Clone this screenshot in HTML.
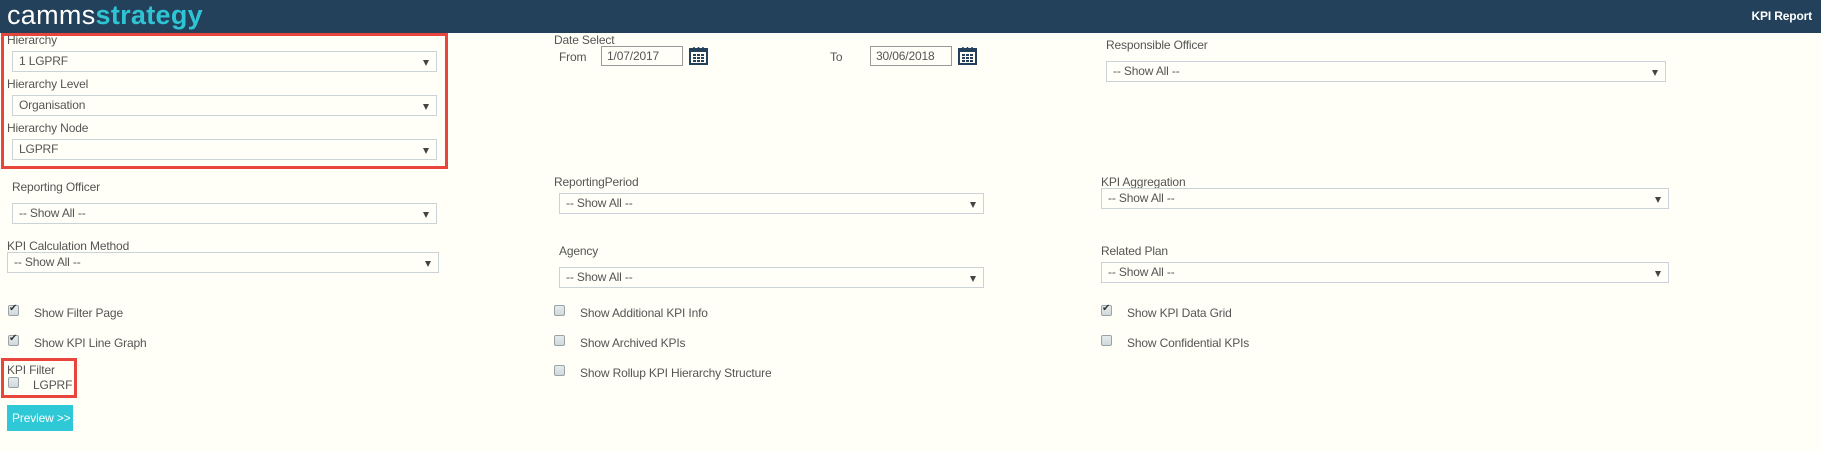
<!DOCTYPE html>
<html><head><meta charset="utf-8"><style>
*{margin:0;padding:0;box-sizing:border-box}
body{width:1821px;height:451px;background:#fffff7;font-family:"Liberation Sans",sans-serif;font-size:12px;letter-spacing:-0.15px;color:#555;position:relative;overflow:hidden}
.hdr{position:absolute;left:0;top:0;width:1821px;height:33px;background:#23415a}
.logo{position:absolute;left:7px;top:0px;font-size:27px;color:#fff;letter-spacing:0.3px;line-height:30px}
.logo b{color:#2fc4d4;font-weight:bold}
.kr{position:absolute;right:9px;top:9px;color:#fff;font-weight:bold;font-size:12px}
.a{position:absolute;white-space:nowrap}
.lbl{position:absolute;white-space:nowrap;line-height:14px;transform:translateY(-7px)}
.sel{position:absolute;border:1px solid #ccd3d8;background:#fffff7;height:21px;line-height:19px;padding-left:6px}
.sel:after{content:"";position:absolute;right:7px;top:8px;border-left:3.5px solid transparent;border-right:3.5px solid transparent;border-top:6px solid #444}
.red{position:absolute;border:3px solid #e8453c}
.cb{position:absolute;width:11px;height:11px;border:1px solid #9aa3a8;border-radius:2px;background:linear-gradient(#e6ecee,#cfd8db)}
.cb.on:after{content:"✔";position:absolute;left:0px;top:-3px;font-size:10px;color:#333}
.inp{position:absolute;border:1px solid #999;height:20px;line-height:18px;padding-left:5px;background:#fffff7}
.btn{position:absolute;left:7px;top:405px;width:66px;height:26px;background:#2ec8d6;color:#fff;line-height:26px;padding-left:5px;font-size:12px}
</style></head><body>
<div class="hdr"><div class="logo">camms<b>strategy</b></div><div class="kr">KPI Report</div></div>

<div class="red" style="left:1px;top:33px;width:447px;height:136px"></div>
<div class="lbl" style="left:7px;top:40px">Hierarchy</div>
<div class="sel" style="left:12px;top:51px;width:425px">1 LGPRF</div>
<div class="lbl" style="left:7px;top:84px">Hierarchy Level</div>
<div class="sel" style="left:12px;top:95px;width:425px">Organisation</div>
<div class="lbl" style="left:7px;top:128px">Hierarchy Node</div>
<div class="sel" style="left:12px;top:139px;width:425px">LGPRF</div>

<div class="lbl" style="left:12px;top:187px">Reporting Officer</div>
<div class="sel" style="left:12px;top:203px;width:425px">-- Show All --</div>
<div class="lbl" style="left:7px;top:246px">KPI Calculation Method</div>
<div class="sel" style="left:7px;top:252px;width:432px">-- Show All --</div>

<div class="lbl" style="left:554px;top:40px">Date Select</div>
<div class="lbl" style="left:559px;top:57px">From</div>
<div class="inp" style="left:601px;top:46px;width:82px">1/07/2017</div>
<svg class="a" style="left:689px;top:46px" width="19" height="19" viewBox="0 0 19 19"><rect x="1" y="3" width="17" height="15" fill="none" stroke="#23415a" stroke-width="2"/><rect x="1" y="3" width="17" height="3" fill="#23415a"/><path d="M5 1v4M9.5 1v4M14 1v4" stroke="#23415a" stroke-width="1.5"/><g fill="#23415a"><rect x="4" y="8" width="3" height="2"/><rect x="8" y="8" width="3" height="2"/><rect x="12" y="8" width="3" height="2"/><rect x="4" y="11" width="3" height="2"/><rect x="8" y="11" width="3" height="2"/><rect x="12" y="11" width="3" height="2"/><rect x="4" y="14" width="3" height="2"/><rect x="8" y="14" width="3" height="2"/><rect x="12" y="14" width="3" height="2"/></g></svg>
<div class="lbl" style="left:830px;top:57px">To</div>
<div class="inp" style="left:870px;top:46px;width:82px">30/06/2018</div>
<svg class="a" style="left:958px;top:46px" width="19" height="19" viewBox="0 0 19 19"><rect x="1" y="3" width="17" height="15" fill="none" stroke="#23415a" stroke-width="2"/><rect x="1" y="3" width="17" height="3" fill="#23415a"/><path d="M5 1v4M9.5 1v4M14 1v4" stroke="#23415a" stroke-width="1.5"/><g fill="#23415a"><rect x="4" y="8" width="3" height="2"/><rect x="8" y="8" width="3" height="2"/><rect x="12" y="8" width="3" height="2"/><rect x="4" y="11" width="3" height="2"/><rect x="8" y="11" width="3" height="2"/><rect x="12" y="11" width="3" height="2"/><rect x="4" y="14" width="3" height="2"/><rect x="8" y="14" width="3" height="2"/><rect x="12" y="14" width="3" height="2"/></g></svg>

<div class="lbl" style="left:554px;top:182px">ReportingPeriod</div>
<div class="sel" style="left:559px;top:193px;width:425px">-- Show All --</div>
<div class="lbl" style="left:559px;top:251px">Agency</div>
<div class="sel" style="left:559px;top:267px;width:425px">-- Show All --</div>

<div class="lbl" style="left:1106px;top:45px">Responsible Officer</div>
<div class="sel" style="left:1106px;top:61px;width:560px">-- Show All --</div>
<div class="lbl" style="left:1101px;top:182px">KPI Aggregation</div>
<div class="sel" style="left:1101px;top:188px;width:568px">-- Show All --</div>
<div class="lbl" style="left:1101px;top:251px">Related Plan</div>
<div class="sel" style="left:1101px;top:262px;width:568px">-- Show All --</div>

<div class="cb on" style="left:8px;top:305px"></div><div class="lbl" style="left:34px;top:313px">Show Filter Page</div>
<div class="cb on" style="left:8px;top:335px"></div><div class="lbl" style="left:34px;top:343px">Show KPI Line Graph</div>

<div class="cb" style="left:554px;top:305px"></div><div class="lbl" style="left:580px;top:313px">Show Additional KPI Info</div>
<div class="cb" style="left:554px;top:335px"></div><div class="lbl" style="left:580px;top:343px">Show Archived KPIs</div>
<div class="cb" style="left:554px;top:365px"></div><div class="lbl" style="left:580px;top:373px">Show Rollup KPI Hierarchy Structure</div>

<div class="cb on" style="left:1101px;top:305px"></div><div class="lbl" style="left:1127px;top:313px">Show KPI Data Grid</div>
<div class="cb" style="left:1101px;top:335px"></div><div class="lbl" style="left:1127px;top:343px">Show Confidential KPIs</div>

<div class="red" style="left:1px;top:358px;width:76px;height:40px"></div>
<div class="lbl" style="left:7px;top:370px">KPI Filter</div>
<div class="cb" style="left:8px;top:377px"></div><div class="lbl" style="left:33px;top:385px">LGPRF</div>

<div class="btn">Preview &gt;&gt;</div>
</body></html>
